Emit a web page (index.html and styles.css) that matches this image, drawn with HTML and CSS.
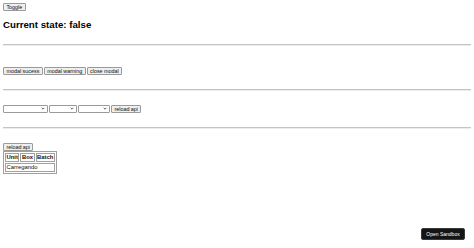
FILE: index.html
```html
<!DOCTYPE html>
<html lang="en">
  <head>
    <meta charset="UTF-8" />
    <meta name="viewport" content="width=device-width, initial-scale=1.0" />
    <title>Sandbox</title>
    <link rel="stylesheet" href="styles.css">
  </head>
  <body>
    <button class="btn">Toggle</button>
    <h2 class="state">Current state: false</h2>
    <hr />

    <div class="row first">
      <button class="btn">modal sucess</button>
      <button class="btn">modal warning</button>
      <button class="btn">close modal</button>
    </div>
    <hr />

    <div class="row">
      <span class="select-wrap unit">
        <select></select>
        <svg viewBox="0 0 6 4"><path d="M1 1l2 2 2-2" /></svg>
      </span>
      <span class="select-wrap box">
        <select></select>
        <svg viewBox="0 0 6 4"><path d="M1 1l2 2 2-2" /></svg>
      </span>
      <span class="select-wrap batch">
        <select></select>
        <svg viewBox="0 0 6 4"><path d="M1 1l2 2 2-2" /></svg>
      </span>
      <button class="btn">reload api</button>
    </div>
    <hr />

    <div class="list">
      <button class="btn">reload api</button>
      <table class="units">
        <thead>
          <tr>
            <th>Unit</th>
            <th>Box</th>
            <th>Batch</th>
          </tr>
        </thead>
        <tbody>
          <tr>
            <td colspan="3">Carregando</td>
          </tr>
        </tbody>
      </table>
    </div>

    <a class="sandbox-btn" href="#">Open Sandbox</a>
  </body>
</html>
```

FILE: styles.css
```css
body {
  font-family: "Liberation Sans", Arial, sans-serif;
  margin: 3px;
  background-color: #fff;
  color: #000;
}

.btn {
  display: block;
  font-family: "Liberation Sans", Arial, sans-serif;
  font-size: 5.4px;
  line-height: 6px;
  height: 8px;
  padding: 0 2.4px;
  margin: 0;
  color: #111;
  background-color: #efefef;
  border: 1px solid #9a9a9a;
  border-radius: 1px;
}

.state {
  font-size: 9.7px;
  line-height: 11px;
  margin: 8px 0 12px;
}

hr {
  margin: 14px 0;
  height: 0;
  border: none;
  border-top: 1px solid #c4c4c4;
  border-bottom: 1px solid #ececec;
}

.row {
  display: flex;
  gap: 1px;
  align-items: flex-start;
}

.first {
  padding-top: 7px;
}

.select-wrap {
  position: relative;
  display: block;
  height: 8px;
}

.select-wrap select {
  appearance: none;
  display: block;
  width: 100%;
  height: 8px;
  margin: 0;
  padding: 0;
  background-color: #fff;
  border: 1px solid #9a9a9a;
  border-radius: 1px;
}

.select-wrap svg {
  position: absolute;
  right: 3px;
  top: 2px;
  width: 4px;
  height: 3px;
  fill: none;
  stroke: #333;
  stroke-width: 1.2;
}

.unit {
  width: 45px;
}

.box {
  width: 28px;
}

.batch {
  width: 32px;
}

.units {
  border: 1px solid #a0a0a0;
  border-spacing: 1px;
  font-size: 5.9px;
  line-height: 7px;
  color: #111;
}

.units th,
.units td {
  border: 1px solid #a0a0a0;
  padding: 0 0.5px;
  text-align: left;
}

.sandbox-btn {
  position: fixed;
  right: 9px;
  bottom: 8px;
  width: 44px;
  height: 12px;
  box-sizing: border-box;
  display: flex;
  align-items: center;
  justify-content: center;
  background-color: #151515;
  color: #fff;
  font-size: 5px;
  border: 1px solid #3a3a3a;
  border-radius: 2px;
  text-decoration: none;
}
```
